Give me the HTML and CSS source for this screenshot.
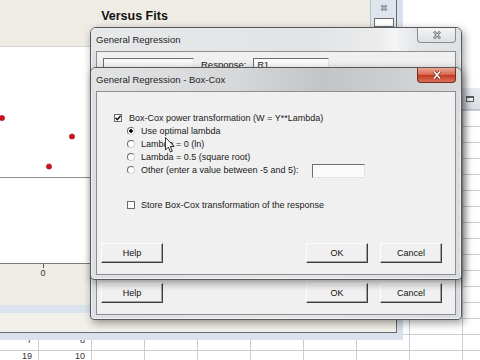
FILE: index.html
```html
<!DOCTYPE html>
<html lang="en">
<head>
    <meta charset="UTF-8">
    <title>General Regression - Box-Cox</title>
    <link rel="stylesheet" href="styles.css">
</head>
<body>
<div class="desktop">

    <!-- Worksheet behind everything -->
    <div class="worksheet">
        <div class="sheet-bar"><span class="restore-btn"></span></div>
        <div class="sheet-grid">
            <div class="sheet-row"><span class="cell">7</span><span class="cell">8</span></div>
            <div class="sheet-row"><span class="cell">19</span><span class="cell">10</span></div>
        </div>
    </div>

    <!-- Graph window -->
    <div class="graph-outer">
        <div class="graph-inner">
            <div class="graph">
                <div class="graph-title">Versus Fits</div>
                <svg class="plot" width="447" height="259" viewBox="0 0 447 259">
                    <rect x="0" y="0" width="447" height="217" fill="#fff"/>
                    <line x1="0" y1="0.5" x2="447" y2="0.5" stroke="#d4d4d4"/>
                    <line x1="0" y1="131.5" x2="447" y2="131.5" stroke="#8d8d8d"/>
                    <line x1="0" y1="217.5" x2="447" y2="217.5" stroke="#7c7c7c"/>
                    <line x1="110.5" y1="218" x2="110.5" y2="222" stroke="#555"/>
                    <text x="110" y="230" class="tick-label" text-anchor="middle">0</text>
                    <circle cx="69" cy="72" r="2.6" class="pt"/>
                    <circle cx="139" cy="90.5" r="2.6" class="pt"/>
                    <circle cx="116" cy="120.5" r="2.6" class="pt"/>
                </svg>
            </div>
            <div class="graph-close">
                <svg width="10" height="9" viewBox="0 0 10 9">
                    <path d="M2 1.5 L8 7.5 M8 1.5 L2 7.5" stroke="#6d7480" stroke-width="2.4"/>
                    <path d="M2 1.5 L8 7.5 M8 1.5 L2 7.5" stroke="#e9edf2" stroke-width="0.8"/>
                </svg>
                <span class="graph-close-box"></span>
            </div>
        </div>
    </div>

    <!-- Back dialog -->
    <div class="dialog dialog-back">
        <div class="title-bar">
            <span class="title-text">General Regression</span>
            <span class="close-btn">
                <svg width="12" height="10" viewBox="0 0 12 10">
                    <path d="M3 1.5 L9 8.5 M9 1.5 L3 8.5" stroke="#6a6e74" stroke-width="2.6"/>
                    <path d="M3 1.5 L9 8.5 M9 1.5 L3 8.5" stroke="#eef0f2" stroke-width="0.9"/>
                </svg>
            </span>
        </div>
        <div class="client">
            <div class="field-row">
                <div class="var-list"></div>
                <span class="resp-label">Response:</span>
                <span class="text-field wide">R1</span>
            </div>
            <div class="button-row">
                <button class="btn">Help</button>
                <button class="btn push">OK</button>
                <button class="btn">Cancel</button>
            </div>
        </div>
    </div>

    <!-- Front dialog -->
    <div class="dialog dialog-front">
        <div class="title-bar">
            <span class="title-text">General Regression - Box-Cox</span>
            <span class="close-btn red">
                <svg width="12" height="10" viewBox="0 0 12 10">
                    <path d="M3 1.5 L9 8.5 M9 1.5 L3 8.5" stroke="#7a2414" stroke-width="3"/>
                    <path d="M3 1.5 L9 8.5 M9 1.5 L3 8.5" stroke="#fff" stroke-width="1.6"/>
                </svg>
            </span>
        </div>
        <div class="client">
            <div class="options">
                <div class="opt">
                    <span class="check">
                        <svg width="6" height="6" viewBox="0 0 6 6"><path d="M0.5 2.8 L2.3 4.8 L5.6 0.8" fill="none" stroke="#111" stroke-width="1.4"/></svg>
                    </span>
                    Box-Cox power transformation (W = Y**Lambda)
                </div>
                <div class="radio-list">
                    <div class="opt"><span class="radio on"></span>Use optimal lambda</div>
                    <div class="opt"><span class="radio"></span>Lambda = 0 (ln)</div>
                    <div class="opt"><span class="radio"></span>Lambda = 0.5 (square root)</div>
                    <div class="opt"><span class="radio"></span>Other (enter a value between -5 and 5):<span class="text-field small"></span></div>
                </div>
                <div class="opt store"><span class="check"></span>Store Box-Cox transformation of the response</div>
            </div>
            <div class="button-row">
                <button class="btn">Help</button>
                <button class="btn push">OK</button>
                <button class="btn">Cancel</button>
            </div>
        </div>
    </div>

    <!-- Mouse pointer -->
    <svg class="cursor" width="10" height="16" viewBox="0 0 12 19">
        <path d="M0.5 0.5 V15.5 L4 12 L6.5 17.8 L8.8 16.8 L6.3 11.2 H11 Z" fill="#fff" stroke="#000" stroke-width="1"/>
    </svg>

</div>
</body>
</html>
```

FILE: styles.css
```css
* {
    box-sizing: border-box;
}
body {
    margin: 0;
    width: 480px;
    height: 360px;
    overflow: hidden;
    background: #fff;
    font-family: "Liberation Sans", Arial, sans-serif;
    font-size: 9px;
    color: #1a1a1a;
}
.desktop {
    position: relative;
    width: 480px;
    height: 360px;
    overflow: hidden;
}

/* worksheet */
.worksheet {
    position: absolute;
    left: 0;
    top: 88px;
    right: 0;
    bottom: 0;
    display: flex;
    flex-direction: column;
}
.sheet-bar {
    height: 22px;
    flex-shrink: 0;
    background: linear-gradient(#e8ecf1, #d8dee5);
    border-bottom: 1px solid #b8c0ca;
    display: flex;
    justify-content: flex-end;
    align-items: center;
    padding-right: 6px;
}
.restore-btn {
    width: 8px;
    height: 6px;
    border: 1px solid #5c5c5c;
    border-top-width: 2px;
    background: #f4f4f4;
}
.sheet-grid {
    flex: 1 0 auto;
    background-image:
        linear-gradient(to right, #c9cdd3 1px, transparent 1px),
        linear-gradient(to bottom, #c9cdd3 1px, transparent 1px);
    background-size: 53px 16px;
    background-position: 38px 0, 0 0;
    padding-top: 224px;
}
.sheet-row {
    display: flex;
    height: 16px;
    margin-left: -15px;
}
.cell {
    width: 53px;
    text-align: right;
    padding-right: 6px;
    line-height: 12px;
    color: #333;
}

/* graph window */
.graph-outer {
    position: absolute;
    left: -127px;
    top: 0;
    width: 530px;
    height: 340px;
    background: #d8e1ec;
    padding: 0 6px 7px 0;
}
.graph-inner {
    position: relative;
    height: 100%;
    background: #f2f0ea;
    border-right: 1px solid #6b6b6b;
    border-bottom: 1px solid #6b6b6b;
}
.graph {
    height: 313px;
    background: #efece6;
    border-bottom: 8px solid #dbe3ed;
}
.graph-title {
    height: 46px;
    padding-top: 9px;
    text-align: center;
    font-size: 12.5px;
    font-weight: bold;
    line-height: 14px;
    color: #111;
}
.plot {
    display: block;
    margin-left: 60px;
}
.tick-label {
    font-size: 9px;
    fill: #333;
}
.pt {
    fill: #d3101e;
    stroke: #9a0a14;
    stroke-width: 0.6;
}
.graph-close {
    position: absolute;
    top: 0;
    right: 0;
    width: 26px;
    height: 27px;
    background: #dfe5ec;
    border-left: 1px solid #b5bfca;
    display: flex;
    flex-direction: column;
    align-items: center;
    padding-top: 4px;
}
.graph-close-box {
    margin-top: 6px;
    width: 20px;
    height: 10px;
    background: #fff;
    border: 1px solid #6c6c6c;
}

/* dialogs */
.dialog {
    position: absolute;
    left: 90px;
    width: 372px;
    display: flex;
    flex-direction: column;
    padding: 0 5px 4px 5px;
    background: linear-gradient(to right, #dcdfe3, #e4e7ea 50%, #d9dde1);
    border: 1px solid #585858;
    border-radius: 6px 6px 4px 4px;
    box-shadow: 2px 3px 8px rgba(0, 0, 0, 0.4), inset 0 0 0 1px rgba(255, 255, 255, 0.55);
}
.dialog-back {
    top: 27px;
    height: 293px;
}
.dialog-front {
    top: 67px;
    height: 213px;
}
.title-bar {
    height: 23px;
    flex-shrink: 0;
    display: flex;
    justify-content: space-between;
    align-items: flex-start;
    margin: 0 -5px;
    padding: 0 5px;
    border-radius: 5px 5px 0 0;
}
.dialog-back .title-bar {
    background: linear-gradient(to right, #e6e8ea 0%, #e1e3e5 60%, #ececec 78%, #f4f5f6 82%, #e3e5e7 88%, #dfe2e4 100%);
}
.dialog-front .title-bar {
    background: linear-gradient(to right, #e2e3e4 0%, #d6d7d8 40%, #c3c4c6 62%, #cbcccd 78%, #d9dadb 100%);
}
.title-text {
    line-height: 23px;
    font-size: 9.5px;
    color: #1e1e1e;
}
.close-btn {
    width: 39px;
    height: 15px;
    display: flex;
    align-items: center;
    justify-content: center;
    border: 1px solid #8a8e94;
    border-top: 0;
    border-radius: 0 0 4px 4px;
    background: linear-gradient(#f3f4f5, #dde0e3);
}
.close-btn.red {
    border-color: #7c2a1c;
    background: linear-gradient(#eca894, #d8664e 48%, #c43a22 52%, #d77258);
}
.client {
    flex: 1;
    min-height: 0;
    overflow: hidden;
    display: flex;
    flex-direction: column;
    background: #f0f0f0;
    border: 1px solid #8e8e8e;
}

/* back dialog fields */
.field-row {
    display: flex;
    align-items: flex-start;
    padding: 6px 0 0 6px;
}
.var-list {
    width: 91px;
    height: 120px;
    background: #f7f7f7;
    border: 1px solid;
    border-color: #6e6e6e #e6e6e6 #e6e6e6 #6e6e6e;
}
.resp-label {
    margin-left: 7px;
    line-height: 14px;
    font-size: 9.5px;
}
.text-field {
    display: block;
    height: 14px;
    background: #fbfbfb;
    border: 1px solid;
    border-color: #6e6e6e #e4e4e4 #e4e4e4 #6e6e6e;
    line-height: 12px;
    padding-left: 3px;
}
.text-field.wide {
    width: 76px;
    margin-left: 7px;
}
.text-field.small {
    width: 53px;
    margin-left: 13px;
    margin-top: 3px;
}

/* front dialog options */
.options {
    padding: 19px 0 0 17px;
}
.opt {
    display: flex;
    align-items: center;
    height: 13px;
    white-space: nowrap;
}
.check {
    width: 8px;
    height: 8px;
    margin-right: 7px;
    background: #fff;
    border: 1px solid #6a6a6a;
    display: flex;
    align-items: center;
    justify-content: center;
}
.radio-list {
    padding-left: 13px;
}
.radio {
    width: 8px;
    height: 8px;
    margin-right: 6px;
    border-radius: 50%;
    border: 1px solid;
    border-color: #6a6a6a #d0d0d0 #d0d0d0 #6a6a6a;
    background: #fff;
}
.radio.on {
    background: radial-gradient(circle, #000 0 1.5px, #fff 2px);
}
.store {
    margin-top: 22px;
    padding-left: 13px;
}
.store .check {
    margin-right: 6px;
}

/* buttons */
.button-row {
    margin-top: auto;
    margin-bottom: 11px;
    display: flex;
    gap: 12px;
    padding: 0 13px 0 4px;
}
.btn {
    width: 62px;
    height: 20px;
    padding: 0;
    font-family: inherit;
    font-size: 9px;
    color: #111;
    background: #f0f0f0;
    border: 1px solid;
    border-color: #fdfdfd #3e3e3e #3e3e3e #fdfdfd;
    box-shadow: inset -1px -1px #a2a2a2;
}
.push {
    margin-left: auto;
}

.cursor {
    position: absolute;
    left: 165px;
    top: 137px;
}
```
